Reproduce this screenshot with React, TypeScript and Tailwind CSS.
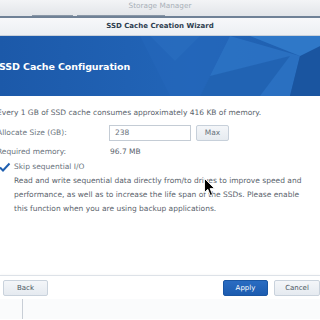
import React from "react";

const font = { fontFamily: '"DejaVu Sans", Verdana, sans-serif' };

function Banner() {
  return (
    <div className="relative h-[60px] overflow-hidden bg-[#1f5fb0]">
      <svg className="absolute inset-0" width="320" height="60" viewBox="0 0 320 60" preserveAspectRatio="none">
        <defs>
          <linearGradient id="bg" x1="0" y1="0" x2="1" y2="0">
            <stop offset="0" stopColor="#1c59a9" />
            <stop offset="0.6" stopColor="#2265b8" />
            <stop offset="1" stopColor="#1f5fae" />
          </linearGradient>
        </defs>
        <rect width="320" height="60" fill="url(#bg)" />
        <polygon points="140,0 230,0 200,60 170,60" fill="#2468ba" opacity="0.6" />
        <polygon points="230,0 300,20 290,60 200,60" fill="#2d74c6" opacity="0.8" />
        <polygon points="300,20 320,10 320,60 290,60" fill="#1a55a0" />
        <polygon points="250,0 320,0 320,10 300,20" fill="#2f78c8" />
        <polygon points="210,40 290,20 260,60 200,60" fill="#1e5eac" opacity="0.7" />
        <polygon points="150,0 200,0 175,25" fill="#2a6ec0" opacity="0.6" />
      </svg>
      <div className="relative flex h-full items-center pt-[2px]">
        <span className="ml-[-1px] text-[9.5px] font-bold tracking-[-0.1px] text-white" style={font}>SSD Cache Configuration</span>
      </div>
    </div>
  );
}

export default function App() {
  return (
    <div className="relative h-[320px] w-[320px] overflow-hidden bg-white" style={font}>
      {/* Storage manager title bar */}
      <div className="relative h-[16px] bg-gradient-to-b from-[#f3f4f6] to-[#e2e5e9]">
        <div className="flex h-[13px] items-center justify-center text-[7.3px] text-[#a9b0b8]">Storage Manager</div>
        <div className="absolute bottom-0 left-[32px] h-[1px] w-[41px] bg-[#8a97a6]" />
        <div className="absolute bottom-0 left-[77px] h-[1px] w-[88px] bg-[#8a97a6]" />
      </div>
      <div className="h-[2px] bg-[#6f8196]" />
      {/* Wizard header */}
      <div className="flex h-[18px] items-center justify-center border-b border-[#c9d1da] bg-gradient-to-b from-[#f7f8fa] to-[#eceff3] text-[7px] font-bold text-[#2e3d4f]">
        SSD Cache Creation Wizard
      </div>
      <Banner />
      {/* Body */}
      <div className="h-[179px] pt-[12px] text-[7.5px] text-[#5a636c]">
        <div className="ml-[-3px] h-[10px] whitespace-nowrap leading-[10px]">Every 1 GB of SSD cache consumes approximately 416 KB of memory.</div>
        <div className="mt-[7px] flex items-center">
          <div className="ml-[-3px] w-[112px] whitespace-nowrap text-[#6a737c]">Allocate Size (GB):</div>
          <div className="flex h-[16px] w-[82px] items-center border border-[#c4ccd5] bg-white pl-[5px] text-[#6a737c]">238</div>
          <div className="ml-[5px] flex h-[16px] w-[33px] items-center justify-center rounded-[2px] border border-[#c7d0da] bg-gradient-to-b from-[#f4f6f9] to-[#e6ebf0] text-[#6a737c]">Max</div>
        </div>
        <div className="mt-[6px] flex h-[10px] items-center">
          <div className="ml-[-3px] w-[113px] whitespace-nowrap text-[#6a737c]">Required memory:</div>
          <div>96.7 MB</div>
        </div>
        <div className="mt-[5px] flex h-[10px] items-center">
          <svg width="12" height="10" viewBox="0 0 12 10" className="ml-[-1px]">
            <path d="M1 5.5 L4 8.5 L10.5 1.5" stroke="#1f5fb0" strokeWidth="2" fill="none" />
          </svg>
          <span className="ml-[3px] text-[#6a737c]">Skip sequential I/O</span>
        </div>
        <div className="ml-[14px] mt-[2px] whitespace-nowrap leading-[14px]">
          <div>Read and write sequential data directly from/to drives to improve speed and</div>
          <div>performance, as well as to increase the life span of the SSDs. Please enable</div>
          <div>this function when you are using backup applications.</div>
        </div>
      </div>
      {/* Footer */}
      <div className="flex h-[24px] items-start justify-between border-t border-[#dde2e8] bg-white px-[3px] pt-[4px] shadow-[0_2px_3px_rgba(0,0,0,0.35)]">
        <div className="flex h-[16px] w-[45px] items-center justify-center rounded-[2px] border border-[#c9d2dc] bg-gradient-to-b from-[#f4f6f9] to-[#e5eaf0] text-[7px] text-[#4a5560]">Back</div>
        <div className="flex gap-[6px]">
          <div className="flex h-[16px] w-[45px] items-center justify-center rounded-[2px] border border-[#1a56a3] bg-gradient-to-b from-[#2a6cc2] to-[#1c5cb0] text-[7px] text-white">Apply</div>
          <div className="mr-[-3px] flex h-[16px] w-[46px] items-center justify-center rounded-[2px] border border-[#c9d2dc] bg-gradient-to-b from-[#f4f6f9] to-[#e5eaf0] text-[7px] text-[#4a5560]">Cancel</div>
        </div>
      </div>
      <div className="flex h-[20px] bg-[#fafbfc]">
        <div className="ml-[22px] h-full w-[1px] bg-[#c8ced6]" />
      </div>
      {/* cursor */}
      <svg className="absolute left-[204px] top-[178px]" width="12" height="19" viewBox="0 0 12 19">
        <path d="M0.5 0.5 L0.5 14.5 L3.8 11.3 L6.3 17.5 L8.6 16.5 L6.1 10.6 L10.6 10.6 Z" fill="#000" stroke="#fff" strokeWidth="0.9" />
      </svg>
    </div>
  );
}
